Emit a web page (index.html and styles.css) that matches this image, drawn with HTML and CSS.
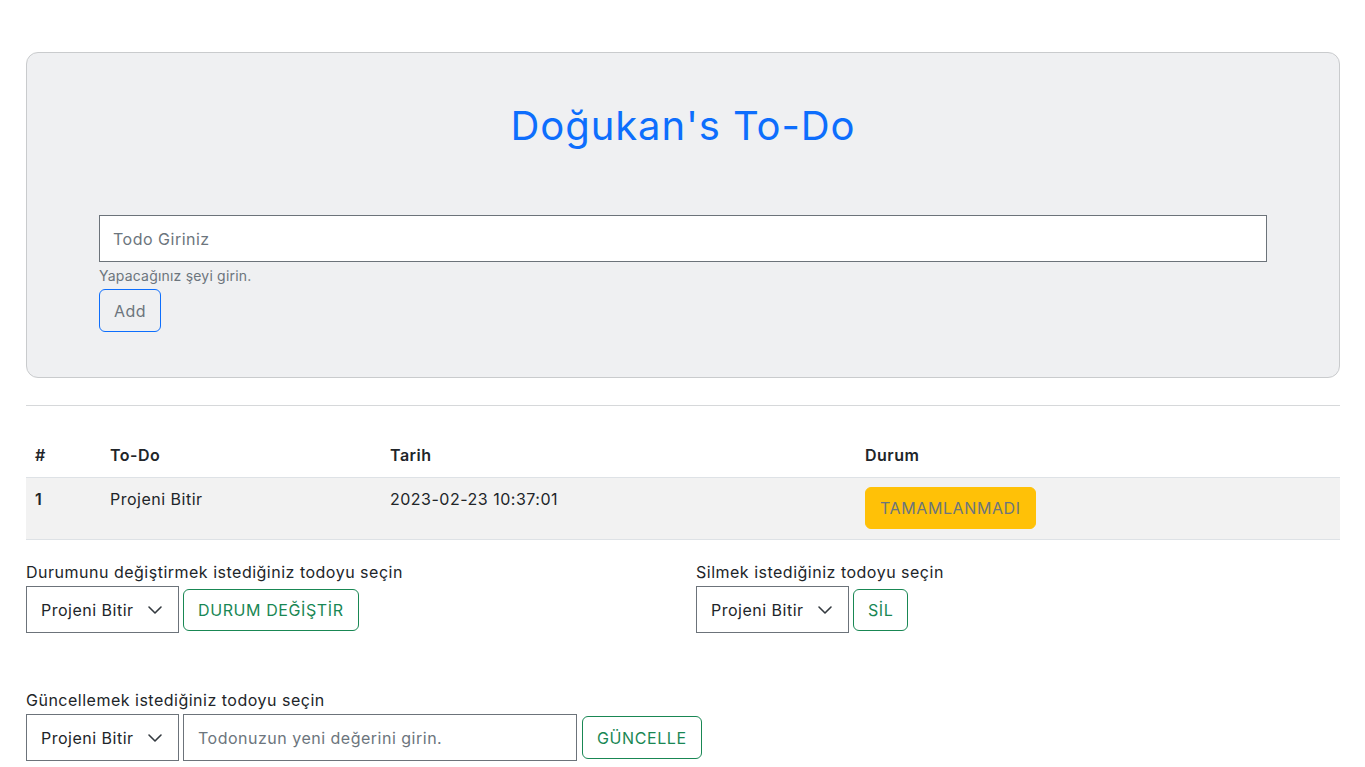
FILE: index.html
```html
<!DOCTYPE html>
<html lang="tr">
<head>
<meta charset="utf-8">
<title>Doğukan's To-Do</title>
<link rel="stylesheet" href="styles.css">
</head>
<body>
<div class="container">
  <section class="jumbo">
    <h1 class="title">Doğukan's To-Do</h1>
    <div class="add-form">
      <input class="text-input big" type="text" placeholder="Todo Giriniz">
      <div class="help">Yapacağınız şeyi girin.</div>
      <button class="btn btn-outline-primary">Add</button>
    </div>
  </section>
  <hr class="sep">
  <table class="table">
    <thead>
      <tr><th class="c1">#</th><th class="c2">To-Do</th><th class="c3">Tarih</th><th class="c4">Durum</th></tr>
    </thead>
    <tbody>
      <tr><td class="num">1</td><td>Projeni Bitir</td><td>2023-02-23 10:37:01</td><td><button class="btn btn-warning">TAMAMLANMADI</button></td></tr>
    </tbody>
  </table>
  <div class="grid">
    <div class="col">
      <label class="lbl">Durumunu değiştirmek istediğiniz todoyu seçin</label>
      <div class="ctrls">
        <div class="select">Projeni Bitir<svg class="chev" viewBox="0 0 16 16" width="16" height="16"><path d="M2 5l6 6 6-6" fill="none" stroke="#343a40" stroke-width="1.6" stroke-linecap="round" stroke-linejoin="round"/></svg></div>
        <button class="btn btn-outline-success">DURUM DEĞİŞTİR</button>
      </div>
    </div>
    <div class="col">
      <label class="lbl">Silmek istediğiniz todoyu seçin</label>
      <div class="ctrls">
        <div class="select">Projeni Bitir<svg class="chev" viewBox="0 0 16 16" width="16" height="16"><path d="M2 5l6 6 6-6" fill="none" stroke="#343a40" stroke-width="1.6" stroke-linecap="round" stroke-linejoin="round"/></svg></div>
        <button class="btn btn-outline-success">SİL</button>
      </div>
    </div>
  </div>
  <div class="update">
    <label class="lbl">Güncellemek istediğiniz todoyu seçin</label>
    <div class="ctrls">
      <div class="select">Projeni Bitir<svg class="chev" viewBox="0 0 16 16" width="16" height="16"><path d="M2 5l6 6 6-6" fill="none" stroke="#343a40" stroke-width="1.6" stroke-linecap="round" stroke-linejoin="round"/></svg></div>
      <input class="text-input upd" type="text" placeholder="Todonuzun yeni değerini girin.">
      <button class="btn btn-outline-success">GÜNCELLE</button>
    </div>
  </div>
</div>
</body>
</html>
```
FILE: styles.css
```css
* { box-sizing: border-box; }
html, body { margin: 0; padding: 0; background: #fff; }
body {
  font-family: Inter, "Noto Sans", sans-serif;
  font-size: 16px;
  color: #212529;
  line-height: 1.5;
  letter-spacing: 0.5px;
}
.container { margin: 0 25px 0 26px; padding-top: 52px; }
.jumbo {
  background: #eff0f2;
  border: 1px solid #c9cbcd;
  border-radius: 12px;
  height: 326px;
  padding: 49px 72px 0 72px;
}
.title {
  margin: 0;
  text-align: center;
  font-weight: 400;
  font-size: 40px;
  line-height: 1.2;
  color: #0d6efd;
  letter-spacing: 0.9px;
}
.add-form { margin-top: 65px; }
.text-input {
  font-family: inherit;
  font-size: 16px;
  letter-spacing: 0.5px;
  color: #212529;
  border: 1px solid #6c737a;
  background: #fff;
  outline: none;
}
.text-input::placeholder { color: #6c757d; }
.text-input.big { width: 100%; height: 47px; padding: 0 13px; display: block; }
.help { font-size: 14px; color: #6c757d; margin-top: 4px; line-height: 20px; letter-spacing: 0.2px; }
.btn {
  font-family: inherit;
  font-size: 16px;
  line-height: 24px;
  letter-spacing: 0.5px;
  border-radius: 6px;
  background: transparent;
  padding: 8px 14px;
  border: 1px solid transparent;
  cursor: pointer;
}
.btn-outline-primary { border-color: #0d6efd; color: #6c757d; margin-top: 3px; height: 43px; }
.btn-warning { background: #ffc107; border-color: #ffc107; color: #6c757d; padding: 8px 14px; height: 42px; letter-spacing: 0.6px; }
.btn-outline-success { border-color: #198754; color: #198754; height: 42px; letter-spacing: 0.6px; }
.sep { border: 0; border-top: 1px solid #d6d8da; margin: 27px 0 0 0; }
.table { width: 100%; border-collapse: collapse; margin-top: 26px; }
.table th { text-align: left; font-weight: 600; padding: 11px 8px 10px 9px; border-bottom: 1px solid #dee2e6; }
.table td { padding: 9px 8px 10px 9px; vertical-align: top; background: #f2f2f2; border-bottom: 1px solid #dee2e6; }
.table td.num { font-weight: 600; }
.table td .btn { display: block; }
.c1 { width: 75px; }
.c2 { width: 280px; }
.c3 { width: 475px; }
.grid { display: grid; grid-template-columns: 670px 1fr; margin-top: 20px; }
.lbl { display: block; line-height: 24px; margin-bottom: 2px; }
.ctrls { display: flex; align-items: center; gap: 4px; }
.select {
  width: 153px;
  height: 47px;
  border: 1px solid #6c737a;
  display: flex;
  align-items: center;
  justify-content: space-between;
  padding: 0 15px 0 14px;
  background: #fff;
}
.chev { display: block; }
.update { margin-top: 55px; }
.text-input.upd { width: 394px; height: 47px; padding: 0 14px; }
.update .btn { margin-left: 1px; height: 43px; }
```
